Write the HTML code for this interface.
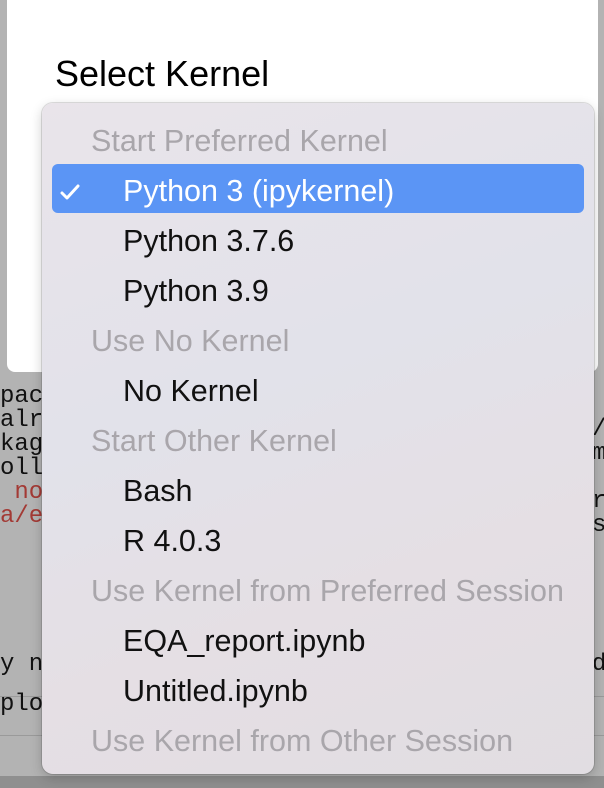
<!DOCTYPE html>
<html><head><meta charset="utf-8"><style>
html,body{margin:0;padding:0;}
body{width:604px;height:788px;position:relative;overflow:hidden;background:#b3b3b3;font-family:"Liberation Sans",sans-serif;}
.code{position:absolute;font-family:"Liberation Mono",monospace;font-size:24px;color:#111;white-space:pre;line-height:24px;}
.red{color:#a33a35;}
.dlg{position:absolute;left:7px;top:0;width:591px;height:372px;background:#fff;border-radius:0 0 8px 8px;}
.title{position:absolute;left:55px;top:53px;font-size:36px;color:#000;}
.menu{position:absolute;left:42px;top:103px;width:552px;height:671px;border-radius:11px;background:linear-gradient(160deg,#e9e4ea 0%,#e2e2ea 40%,#e5dfe4 70%,#e1dde2 100%);box-shadow:0 0 0 1px rgba(0,0,0,0.12),0 4px 12px rgba(0,0,0,0.2);}
.row{position:absolute;left:0;height:50px;line-height:52px;font-size:30.5px;color:#111;white-space:nowrap;}
.h{color:#a9a6ab;left:49px;}
.i{left:81px;}
.sel{position:absolute;left:10px;top:61px;width:532px;height:49px;background:#5b95f5;border-radius:6px;}
</style></head><body>
<div class="code" style="left:0;top:385px">pac
alr
kag
oll
<span class="red"> no</span>
<span class="red">a/e</span></div>
<div class="code" style="left:0;top:653px">y n</div>
<div style="position:absolute;left:0;top:696px;width:604px;height:1px;background:#9a9a9a"></div>
<div class="code" style="left:0;top:693px">plo</div>
<div style="position:absolute;left:0;top:735px;width:604px;height:1px;background:#9a9a9a"></div>
<div class="code" style="left:592px;top:418px">/
m

r
s</div>
<div class="code" style="left:592px;top:653px">d</div>
<div style="position:absolute;left:0;top:776px;width:604px;height:12px;background:#8f8f8f"></div>
<div class="dlg"></div>
<div class="title">Select Kernel</div>
<div class="menu">
<div class="sel"></div>
<div class="row h" style="top:12px">Start Preferred Kernel</div>
<svg style="position:absolute;left:17px;top:80px" width="22" height="18" viewBox="0 0 22 18"><path d="M3 10 L8 15 L19 3" fill="none" stroke="#fff" stroke-width="3" stroke-linecap="round" stroke-linejoin="round"/></svg>
<div class="row i" style="top:62px;color:#fff">Python 3 (ipykernel)</div>
<div class="row i" style="top:112px">Python 3.7.6</div>
<div class="row i" style="top:162px">Python 3.9</div>
<div class="row h" style="top:212px">Use No Kernel</div>
<div class="row i" style="top:262px">No Kernel</div>
<div class="row h" style="top:312px">Start Other Kernel</div>
<div class="row i" style="top:362px">Bash</div>
<div class="row i" style="top:412px">R 4.0.3</div>
<div class="row h" style="top:462px">Use Kernel from Preferred Session</div>
<div class="row i" style="top:512px">EQA_report.ipynb</div>
<div class="row i" style="top:562px">Untitled.ipynb</div>
<div class="row h" style="top:612px">Use Kernel from Other Session</div>
</div>
</body></html>
